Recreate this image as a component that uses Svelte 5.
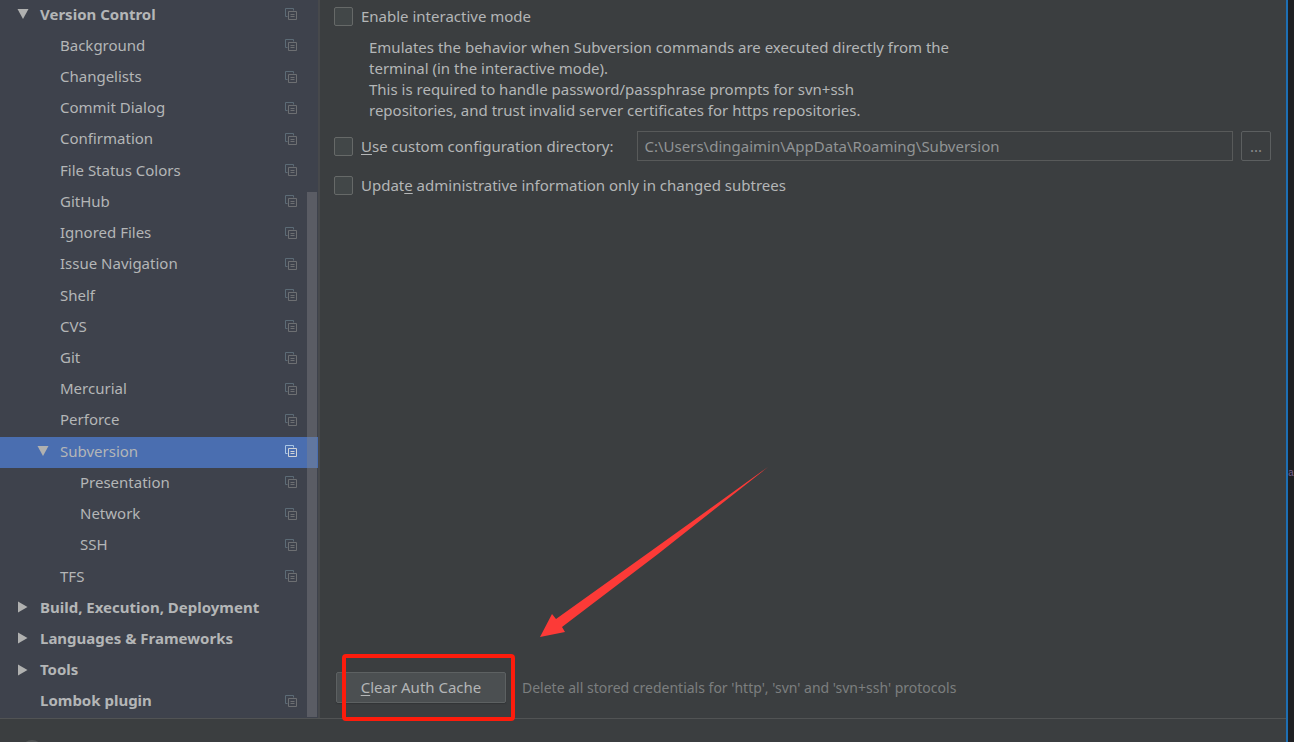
<script>
    let items = [
        { name: "Version Control", level: 0, arrow: "down", copy: true },
        { name: "Background", level: 1, copy: true },
        { name: "Changelists", level: 1, copy: true },
        { name: "Commit Dialog", level: 1, copy: true },
        { name: "Confirmation", level: 1, copy: true },
        { name: "File Status Colors", level: 1, copy: true },
        { name: "GitHub", level: 1, copy: true },
        { name: "Ignored Files", level: 1, copy: true },
        { name: "Issue Navigation", level: 1, copy: true },
        { name: "Shelf", level: 1, copy: true },
        { name: "CVS", level: 1, copy: true },
        { name: "Git", level: 1, copy: true },
        { name: "Mercurial", level: 1, copy: true },
        { name: "Perforce", level: 1, copy: true },
        { name: "Subversion", level: 1, arrow: "down", copy: true },
        { name: "Presentation", level: 2, copy: true },
        { name: "Network", level: 2, copy: true },
        { name: "SSH", level: 2, copy: true },
        { name: "TFS", level: 1, copy: true },
        { name: "Build, Execution, Deployment", level: 0, arrow: "right" },
        { name: "Languages & Frameworks", level: 0, arrow: "right" },
        { name: "Tools", level: 0, arrow: "right" },
        { name: "Lombok plugin", level: 0, copy: true }
    ]

    let selected = "Subversion"
    let interactive = false
    let customDir = false
    let updateAdmin = false
    let directory = "C:\\Users\\dingaimin\\AppData\\Roaming\\Subversion"
</script>

<div class="window">
    <div class="dialog">
        <div class="content">
            <nav>
                {#each items as item}
                    <button class="item level{item.level}" class:selected={item.name == selected} on:click={() => selected = item.name}>
                        <span class="arrow">
                            {#if item.arrow == "down"}
                                <svg width="12" height="12" viewBox="0 0 12 12"><path d="M0.500 1h11L6 11z" /></svg>
                            {:else if item.arrow == "right"}
                                <svg width="12" height="12" viewBox="0 0 12 12"><path d="M1 0.500v11L10.500 6z" /></svg>
                            {/if}
                        </span>
                        <span class="name">{item.name}</span>
                        {#if item.copy}
                            <svg class="copy" width="12" height="12" viewBox="0 0 12 12">
                                <path class="back" d="M2.500 8.500h-2v-8h8v2" />
                                <path class="front" d="M3.500 3.500h8v8h-8zM5.500 6.500h4M5.500 8.500h4" />
                            </svg>
                        {/if}
                    </button>
                {/each}
                <div class="scrollbar"></div>
            </nav>

            <main>
                <label class="check">
                    <input type="checkbox" bind:checked={interactive}>
                    <span>Enable interactive mode</span>
                </label>
                <p class="description">
                    Emulates the behavior when Subversion commands are executed directly from the<br>
                    terminal (in the interactive mode).<br>
                    This is required to handle password/passphrase prompts for svn+ssh<br>
                    repositories, and trust invalid server certificates for https repositories.
                </p>
                <div class="directory">
                    <label class="check">
                        <input type="checkbox" bind:checked={customDir}>
                        <span><u>U</u>se custom configuration directory:</span>
                    </label>
                    <input class="path" type="text" aria-label="Configuration directory" bind:value={directory} disabled={!customDir}>
                    <button class="browse" aria-label="Browse" disabled={!customDir}>...</button>
                </div>
                <label class="check">
                    <input type="checkbox" bind:checked={updateAdmin}>
                    <span>Updat<u>e</u> administrative information only in changed subtrees</span>
                </label>

                <div class="auth">
                    <button class="clear"><u>C</u>lear Auth Cache</button>
                    <span class="hint">Delete all stored credentials for 'http', 'svn' and 'svn+ssh' protocols</span>
                    <div class="frame"></div>
                    <svg class="pointer" width="230" height="172" viewBox="0 0 230 172">
                        <path d="M0 170L12 147L16 152L118 79L228 0L118 87L22 160L25 165z" />
                    </svg>
                </div>
            </main>
        </div>
        <footer>
            <svg width="24" height="24" viewBox="0 0 24 24"><circle cx="12" cy="12" r="11" /></svg>
        </footer>
    </div>
    <aside><span>a</span></aside>
</div>

<style>
    :global(body) {
        margin: 0;
        background: #1e1f22;
    }

    .window {
        display: flex;
        height: 100vh;
        min-height: 640px;
        overflow: hidden;
        font-family: "Noto Sans", "Open Sans", sans-serif;
        font-size: 15px;
        line-height: 21px;
        color: #b4b6b7;
    }

    .dialog {
        flex: 1;
        display: flex;
        flex-direction: column;
        min-width: 0;
        background: #3b3e40;
        border-right: 2px solid #1e6fb4;
    }

    .content {
        flex: 1;
        display: flex;
        min-height: 0;
    }

    button, input {
        font: inherit;
        color: inherit;
    }

    nav {
        position: relative;
        display: flex;
        flex-direction: column;
        width: 318px;
        flex-shrink: 0;
        background: #3e424c;
        border-right: 2px solid #47494c;
    }

    .item {
        flex: 1;
        display: flex;
        align-items: center;
        min-height: 0;
        padding: 0 21px 3px 17px;
        border: none;
        background: none;
        text-align: left;
    }

    .level0 {
        font-weight: bold;
    }

    .level1 {
        padding-left: 37px;
    }

    .level2 {
        padding-left: 57px;
    }

    .selected {
        background: #4a6eb0;
    }

    .arrow {
        display: flex;
        width: 23px;
        fill: #b0b1b0;
    }

    .name {
        flex: 1;
    }

    .copy {
        fill: none;
    }

    .back {
        stroke: #5c6b76;
    }

    .front {
        stroke: #6d6f72;
    }

    .selected .back {
        stroke: #a9c6e6;
    }

    .selected .front {
        stroke: #d0d3d6;
    }

    .scrollbar {
        position: absolute;
        top: 192px;
        right: 1px;
        bottom: 1px;
        width: 10px;
        background: rgba(133, 133, 138, 0.4);
    }

    main {
        flex: 1;
        display: flex;
        flex-direction: column;
        min-width: 0;
        padding: 6px 15px 15px 14px;
    }

    .check {
        display: flex;
        align-items: center;
        gap: 8px;
        white-space: nowrap;
    }

    .check input {
        appearance: none;
        width: 19px;
        height: 19px;
        margin: 0;
        border: 1px solid #666968;
        border-radius: 2px;
        background: #424748;
    }

    .check input:checked {
        background: #4a6eb0;
    }

    u {
        text-underline-offset: 2px;
    }

    .description {
        margin: 10px 0 10px 35px;
    }

    .directory {
        display: flex;
        align-items: center;
        margin-bottom: 14px;
    }

    .path {
        flex: 1;
        min-width: 0;
        height: 30px;
        box-sizing: border-box;
        margin: 0 8px 0 23px;
        padding: 0 7px;
        border: 1px solid #585a5a;
        background: #3b3e40;
        color: #919495;
    }

    .browse {
        width: 30px;
        height: 30px;
        padding: 0;
        border: 1px solid #5c5f60;
        border-radius: 2px;
        background: #3b3e40;
        color: #8a8c8d;
    }

    .auth {
        position: relative;
        display: flex;
        align-items: center;
        margin-top: auto;
    }

    .clear {
        width: 170px;
        height: 31px;
        margin-left: 2px;
        padding: 0;
        border: 1px solid #5d6162;
        border-radius: 2px;
        background: #4b4f51;
        box-shadow: 0 1px 1px #323537;
    }

    .hint {
        margin-left: 16px;
        font-size: 14px;
        color: #7c7e7f;
        white-space: nowrap;
    }

    .frame {
        position: absolute;
        left: 8px;
        top: -18px;
        width: 165px;
        height: 59px;
        border: 4px solid #fd1c0c;
        border-radius: 4px;
        pointer-events: none;
    }

    .pointer {
        position: absolute;
        left: 206px;
        bottom: 64px;
        fill: #fc3a37;
        pointer-events: none;
    }

    footer {
        height: 23px;
        padding-left: 20px;
        border-top: 1px solid #515354;
        overflow: hidden;
    }

    footer svg {
        margin-top: 20px;
        fill: #505354;
    }

    aside {
        width: 6px;
        display: flex;
        align-items: center;
        background: #1e1f22;
        color: #77628f;
    }

    aside span {
        margin-top: 204px;
        font-family: "Liberation Mono", monospace;
        font-size: 10px;
    }
</style>
